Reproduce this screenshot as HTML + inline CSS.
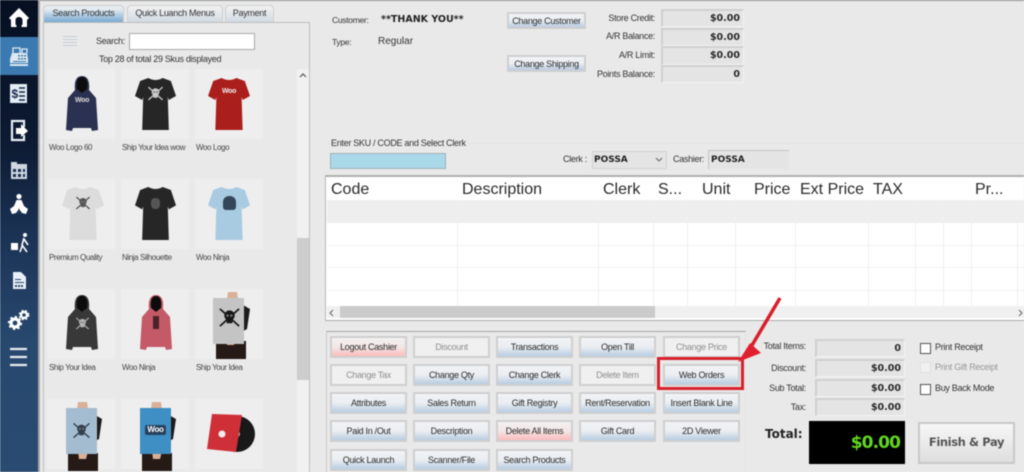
<!DOCTYPE html>
<html><head><meta charset="utf-8"><style>
html,body{margin:0;padding:0;width:1024px;height:472px;overflow:hidden;background:#e9e9e9}
body{font-family:"Liberation Sans",sans-serif;font-size:9px;color:#333;letter-spacing:-.3px}
#w{position:absolute;left:0;top:0;width:1024px;height:472px;overflow:hidden;background:#e9e9e9;filter:blur(.4px)}
.a,.t,.b,.v,.r{position:absolute}
.t{white-space:nowrap;line-height:12px}
.r{white-space:nowrap;line-height:12px;text-align:right}
.b{box-sizing:border-box;border:2px solid #cfcfcf;background:linear-gradient(#f1f3f6 0,#ebeef2 50%,#b9cde2 100%);text-align:center;color:#2a2a2a;white-space:nowrap;line-height:18px}
.b.p{background:linear-gradient(#f3f1f1 0,#f3e6e6 50%,#fbbcbc 100%)}
.b.d{background:#f0f0f0;color:#8e8e8e}
.v{box-sizing:border-box;background:#e4e4e4;border-top:2px solid #d0d0d0;border-left:2px solid #d0d0d0;border-right:1px solid #f2f2f2;border-bottom:1px solid #f2f2f2;text-align:right;font:bold 9.5px/15px "DejaVu Sans",sans-serif;letter-spacing:0;color:#2a2a2a;padding-right:3px}
.cb{position:absolute;width:9px;height:9px;border:1px solid #555;background:#fff}
.c{position:absolute;width:68px;height:70px;background:#eeeeee}
.l{font-size:8px;letter-spacing:-.4px;color:#444}
.tt{position:absolute;height:17px;border:1px solid #cfcfcf;border-bottom:0;box-sizing:border-box;border-radius:4px 4px 0 0;text-align:center;line-height:15px;background:linear-gradient(#f2f2f2,#d0dae3)}
.h{position:absolute;top:181px;font-size:16px;line-height:18px;color:#2a2a2a;white-space:nowrap;letter-spacing:0}
.vl{position:absolute;top:200px;height:106px;width:1px;background:#efefef}
.hl{position:absolute;left:327px;width:697px;height:1px;background:#f3f3f3}
.ic{position:absolute;left:0;width:38px;height:38px}
</style></head><body><div id="w">
<svg width="0" height="0" style="position:absolute"><defs>
<symbol id="tee" viewBox="0 0 40 52" preserveAspectRatio="none"><path fill="currentColor" d="M13 0Q20 4 27 0L35 3L40 18L33 22L32 19L33 52L7 52L8 19L7 22L0 18L5 3Z"/></symbol>
<symbol id="hood" viewBox="0 0 32 56" preserveAspectRatio="none"><path fill="currentColor" d="M16 0C22 0 24 6 23 14L30 22L32 54L26 55L25 52L7 52L6 55L0 54L2 22L9 14C8 6 10 0 16 0Z"/><path fill="#0c0c0c" d="M16 1C21 1 22 7 21 13L16 17L11 13C10 7 11 1 16 1Z"/></symbol>
<symbol id="skull" viewBox="0 0 24 24"><circle cx="12" cy="10" r="5.500" fill="currentColor"/><path fill="currentColor" d="M9 14H15V18H9Z"/><path stroke="currentColor" stroke-width="1.800" d="M2 3L22 21M22 3L2 21"/><circle cx="10" cy="10" r="1.300" fill="#777"/><circle cx="14" cy="10" r="1.300" fill="#777"/></symbol>
</defs></svg>

<!-- sidebar -->
<div class="a" style="left:0;top:0;width:38px;height:472px;background:linear-gradient(#071022 0,#0d1a32 30%,#1b3355 50%,#28486e 72%,#2a4b72 100%)"></div>
<div class="a" style="left:0;top:37px;width:38px;height:38px;background:#3a7ab0"></div>
<div class="a" style="left:38px;top:0;width:2px;height:472px;background:#a6a6a6"></div>
<div class="a" style="left:40px;top:0;width:984px;height:1px;background:#8c8c8c"></div>

<svg class="ic" style="top:0" viewBox="0 0 38 38"><path fill="#fff" d="M19 8L29 18L27 20V27H21.500V20.500C21.500 18 16.500 18 16.500 20.500V27H11V20L9 18Z"/><path fill="#0a1428" d="M15.500 25V20C15.500 16 22.500 16 22.500 20V25H21V20.500C21 18.500 17 18.500 17 20.500V25Z"/></svg>
<svg class="ic" style="top:37px" viewBox="0 0 38 38"><path fill="#dfe8f0" d="M10 26V22L12 16H27L28 22V26Z"/><path fill="#dfe8f0" d="M10 27H28V29H10Z"/><path fill="#3a7ab0" d="M18 18h2v1.500h-2zM21 18h2v1.500h-2zM24 18h2v1.500h-2zM18 21h2v1.500h-2zM21 21h2v1.500h-2zM24 21h2v1.500h-2zM13 24h13v1H13z"/><path fill="none" stroke="#dfe8f0" stroke-width="1.300" d="M13 16V11H20V16M22 16V12H27V16"/></svg>
<svg class="ic" style="top:75px" viewBox="0 0 38 38"><path fill="#e4edf4" d="M10 9H27V28H10Z"/><text x="11.500" y="23" font-family="Liberation Sans" font-weight="bold" font-size="12" fill="#14274a" letter-spacing="0">$</text><path stroke="#14274a" stroke-width="1.400" d="M19 13H25M19 17H25M19 21H25M19 25H25"/></svg>
<svg class="ic" style="top:112px" viewBox="0 0 38 38"><path fill="none" stroke="#e8eef4" stroke-width="2.200" d="M24 15V9H12V28H24V23"/><path fill="#fff" d="M16 16H21V12L28 19L21 25V22H16Z"/></svg>
<svg class="ic" style="top:150px" viewBox="0 0 38 38"><path fill="#cfd8e2" d="M11 12H17V14H27V29H11Z"/><path fill="#18304f" d="M13 19h3v3h-3zM18 19h3v3h-3zM23 19h2v3h-2zM13 24h3v3h-3zM18 24h3v3h-3zM23 24h2v3h-2z"/></svg>
<svg class="ic" style="top:187px" viewBox="0 0 38 38"><circle cx="19" cy="9.500" r="2.600" fill="#fff"/><path fill="#fff" d="M16.500 13H21.500L24 19L28 22L26 27L22 26L19 22L16 26L12 27L10 22L14 19Z"/><path fill="#1b3355" d="M19 21L17 27H21Z"/></svg>
<svg class="ic" style="top:225px" viewBox="0 0 38 38"><circle cx="25" cy="10" r="2" fill="#fff"/><path fill="none" stroke="#fff" stroke-width="1.600" d="M24 13L22 20L27 27M22.500 20L20 27M24 14L28 20"/><path fill="#fff" d="M11 18H18V25H11Z"/></svg>
<svg class="ic" style="top:263px" viewBox="0 0 38 38"><path fill="#e8f0f8" d="M13 9H21L26 14V26H13Z"/><path fill="#27466b" d="M15 16H21V17H15ZM15 19H24V20H15ZM15 22H17V24H15ZM18 22H20V24H18ZM21 22H23V24H21Z"/></svg>
<svg class="ic" style="top:301px" viewBox="0 0 38 38"><circle cx="15" cy="22" r="4" fill="none" stroke="#fff" stroke-width="3.200"/><circle cx="15" cy="22" r="6.200" fill="none" stroke="#fff" stroke-width="1.800" stroke-dasharray="2.200 2.600"/><circle cx="24" cy="14" r="3" fill="none" stroke="#fff" stroke-width="2.400"/><circle cx="24" cy="14" r="4.600" fill="none" stroke="#fff" stroke-width="1.500" stroke-dasharray="1.800 2"/></svg>
<svg class="ic" style="top:338px" viewBox="0 0 38 38"><path stroke="#e6ecf2" stroke-width="2.200" d="M10 11H27M10 19H27M10 27H27"/></svg>

<!-- left tabs and panel -->
<div class="tt" style="left:43px;top:5px;width:81px;background:linear-gradient(#e4ebf1 20%,#7aaad2)">Search Products</div>
<div class="tt" style="left:127px;top:5px;width:96px">Quick Luanch Menus</div>
<div class="tt" style="left:225px;top:5px;width:49px">Payment</div>
<div class="a" style="left:43px;top:22px;width:267px;height:450px;box-sizing:border-box;border:1px solid #bdbdbd;border-bottom:0"></div>
<svg class="a" style="left:63px;top:35px" width="14" height="13"><path stroke="#c5ced8" d="M0 1.500H14M0 4.500H14M0 7.500H14M0 10.500H14"/></svg>
<div class="t" style="left:96px;top:35px">Search:</div>
<div class="a" style="left:129px;top:33px;width:126px;height:17px;box-sizing:border-box;background:#fff;border:1px solid #a8a8a8"></div>
<div class="t" style="left:99px;top:53px">Top 28 of total 29 Skus displayed</div>

<div class="a" style="left:297px;top:69px;width:12px;height:403px;background:#f1f1f1"></div>
<div class="a" style="left:297px;top:238px;width:12px;height:142px;background:#cdcdcd"></div>
<svg class="a" style="left:299px;top:72px" width="8" height="6"><path fill="none" stroke="#555" stroke-width="1.200" d="M1 5L4 2L7 5"/></svg>

<!-- product cells -->
<div class="c" style="left:47px;top:69px"></div><div class="c" style="left:121px;top:69px"></div><div class="c" style="left:195px;top:69px"></div>
<div class="c" style="left:47px;top:179px"></div><div class="c" style="left:121px;top:179px"></div><div class="c" style="left:195px;top:179px"></div>
<div class="c" style="left:47px;top:289px"></div><div class="c" style="left:121px;top:289px"></div><div class="c" style="left:195px;top:289px"></div>
<div class="c" style="left:47px;top:399px"></div><div class="c" style="left:121px;top:399px"></div><div class="c" style="left:195px;top:399px"></div>

<svg class="a" style="left:66px;top:76px;color:#2b3150" width="32" height="56"><use href="#hood" width="32" height="56"/></svg>
<div class="t" style="left:75px;top:97px;color:#ddd;font:bold 7px/8px 'Liberation Sans',sans-serif">Woo</div>
<svg class="a" style="left:135px;top:78px;color:#262626" width="41" height="52"><use href="#tee" width="41" height="52"/></svg>
<svg class="a" style="left:147px;top:85px;color:#c9c9c9" width="17" height="17"><use href="#skull" width="17" height="17"/></svg>
<svg class="a" style="left:208px;top:78px;color:#aa1f1c" width="42" height="52"><use href="#tee" width="42" height="52"/></svg>
<div class="t" style="left:222px;top:88px;color:#eee;font:bold 7px/8px 'Liberation Sans',sans-serif">Woo</div>
<svg class="a" style="left:62px;top:187px;color:#dcdcdc" width="42" height="53"><use href="#tee" width="42" height="53"/></svg>
<svg class="a" style="left:75px;top:195px;color:#555" width="16" height="16"><use href="#skull" width="16" height="16"/></svg>
<svg class="a" style="left:135px;top:187px;color:#262626" width="41" height="53"><use href="#tee" width="41" height="53"/></svg>
<div class="a" style="left:151px;top:198px;width:9px;height:11px;border-radius:4px;background:#555"></div>
<svg class="a" style="left:208px;top:187px;color:#a8cbe2" width="42" height="53"><use href="#tee" width="42" height="53"/></svg>
<div class="a" style="left:223px;top:196px;width:13px;height:14px;border-radius:6px 6px 3px 3px;background:#33465a"></div>
<svg class="a" style="left:66px;top:295px;color:#383838" width="32" height="56"><use href="#hood" width="32" height="56"/></svg>
<svg class="a" style="left:75px;top:316px;color:#b5b5b5" width="15" height="15"><use href="#skull" width="15" height="15"/></svg>
<svg class="a" style="left:140px;top:295px;color:#c45a68" width="32" height="56"><use href="#hood" width="32" height="56"/></svg>
<div class="a" style="left:153px;top:316px;width:6px;height:13px;background:#4a2228"></div>

<!-- posters -->
<svg class="a" style="left:210px;top:291px" width="44" height="70"><path fill="#1c1c1c" d="M33 14L40 18L37 38L30 42Z"/><path fill="#251a15" d="M6 50H36V68H6Z"/><path fill="#d9b098" d="M18 1H27L28 8H17ZM16 46H26L24 54H17Z"/><path fill="#c4c4c4" d="M3 7H34V53H3Z"/></svg>
<svg class="a" style="left:218px;top:306px;color:#161616" width="23" height="23"><use href="#skull" width="23" height="23"/></svg>
<svg class="a" style="left:62px;top:401px" width="44" height="70"><path fill="#1c1c1c" d="M33 14L40 18L37 38L30 42Z"/><path fill="#251a15" d="M6 52H36V70H6Z"/><path fill="#d9b098" d="M16 1H25L26 8H15ZM16 50H26L24 58H17Z"/><path fill="#a3bcd0" d="M4 7H35V53H4Z"/></svg>
<svg class="a" style="left:72px;top:421px;color:#32404e" width="19" height="19"><use href="#skull" width="19" height="19"/></svg>
<svg class="a" style="left:136px;top:401px" width="44" height="70"><path fill="#1c1c1c" d="M33 14L40 18L37 38L30 42Z"/><path fill="#251a15" d="M6 52H36V70H6Z"/><path fill="#d9b098" d="M16 1H25L26 8H15ZM16 50H26L24 58H17Z"/><path fill="#3f8fc4" d="M4 7H35V53H4Z"/></svg>
<div class="t" style="left:145px;top:425px;width:21px;height:10px;background:#26405c;color:#fff;font:bold 8px/10px 'Liberation Sans',sans-serif;text-align:center;border-radius:2px">Woo</div>
<svg class="a" style="left:200px;top:408px" width="60" height="50"><circle cx="37" cy="26" r="18" fill="#191919"/><circle cx="37" cy="26" r="3" fill="#bbb"/><path fill="#cf3038" d="M12 6L42 7L36 44L7 41Z"/><circle cx="22" cy="26" r="3.500" fill="#eee"/></svg>

<div class="t l" style="left:49px;top:142px">Woo Logo 60</div>
<div class="t l" style="left:122px;top:142px">Ship Your Idea wow</div>
<div class="t l" style="left:196px;top:142px">Woo Logo</div>
<div class="t l" style="left:49px;top:252px">Premium Quality</div>
<div class="t l" style="left:122px;top:252px">Ninja Silhouette</div>
<div class="t l" style="left:196px;top:252px">Woo Ninja</div>
<div class="t l" style="left:49px;top:362px">Ship Your Idea</div>
<div class="t l" style="left:122px;top:362px">Woo Ninja</div>
<div class="t l" style="left:196px;top:362px">Ship Your Idea</div>

<!-- customer area -->
<div class="t" style="left:332px;top:14px;font-size:8.500px">Customer:</div>
<div class="t" style="left:381px;top:14px;font:bold 9.500px/12px 'DejaVu Sans',sans-serif;letter-spacing:0;color:#222">**THANK YOU**</div>
<div class="t" style="left:332px;top:36px;font-size:8.500px">Type:</div>
<div class="t" style="left:378px;top:36px;font-size:10px;letter-spacing:0">Regular</div>
<div class="b" style="left:507px;top:12px;width:79px;height:17px;line-height:14px">Change Customer</div>
<div class="b" style="left:507px;top:55px;width:79px;height:17px;line-height:14px">Change Shipping</div>
<div class="r" style="right:369px;top:12px">Store Credit:</div>
<div class="r" style="right:369px;top:30px">A/R Balance:</div>
<div class="r" style="right:369px;top:49px">A/R Limit:</div>
<div class="r" style="right:369px;top:68px">Points Balance:</div>
<div class="v" style="left:661px;top:9px;width:83px;height:18px">$0.00</div>
<div class="v" style="left:661px;top:28px;width:83px;height:18px">$0.00</div>
<div class="v" style="left:661px;top:46px;width:83px;height:19px">$0.00</div>
<div class="v" style="left:661px;top:65px;width:83px;height:18px">0</div>

<div class="a" style="left:326px;top:143px;width:698px;height:1px;background:#e2e2e2"></div>
<div class="t" style="left:331px;top:137px;background:#e9e9e9;padding-right:2px">Enter SKU / CODE and Select Clerk</div>
<div class="a" style="left:330px;top:153px;width:116px;height:16px;box-sizing:border-box;background:#a9d8e8;border:1px solid #a2b0b6"></div>
<div class="t" style="left:563px;top:153px">Clerk :</div>
<div class="a" style="left:592px;top:151px;width:75px;height:18px;box-sizing:border-box;background:#e4e4e4;border:1px solid #d2d2d2"></div>
<div class="t" style="left:594px;top:154px;font:bold 9px/12px 'DejaVu Sans',sans-serif;letter-spacing:0;color:#222">POSSA</div>
<svg class="a" style="left:655px;top:157px" width="8" height="6"><path fill="none" stroke="#666" d="M1 1L4 4L7 1"/></svg>
<div class="t" style="left:673px;top:153px">Cashier:</div>
<div class="a" style="left:708px;top:150px;width:81px;height:19px;box-sizing:border-box;background:#e4e4e4;border-top:1px solid #c4c4c4;border-left:1px solid #c4c4c4"></div>
<div class="t" style="left:711px;top:154px;font:bold 9px/12px 'DejaVu Sans',sans-serif;letter-spacing:0;color:#222">POSSA</div>

<!-- table -->
<div class="a" style="left:325px;top:175px;width:699px;height:146px;box-sizing:border-box;background:#fff;border-top:2px solid #b0b0b0;border-bottom:1px solid #a8a8a8;border-left:1px solid #b8b8b8"></div>
<div class="a" style="left:327px;top:200px;width:697px;height:23px;background:#eeeeee"></div>
<div class="hl" style="top:245px"></div><div class="hl" style="top:267px"></div><div class="hl" style="top:290px"></div>
<div class="vl" style="left:457px"></div><div class="vl" style="left:598px"></div><div class="vl" style="left:653px"></div><div class="vl" style="left:687px"></div><div class="vl" style="left:735px"></div><div class="vl" style="left:795px"></div><div class="vl" style="left:868px"></div><div class="vl" style="left:915px"></div><div class="vl" style="left:943px"></div><div class="vl" style="left:971px"></div><div class="vl" style="left:1017px"></div>
<div class="h" style="left:331px">Code</div>
<div class="h" style="left:462px">Description</div>
<div class="h" style="left:603px">Clerk</div>
<div class="h" style="left:658px">S...</div>
<div class="h" style="left:702px">Unit</div>
<div class="h" style="left:754px">Price</div>
<div class="h" style="left:800px">Ext Price</div>
<div class="h" style="left:873px">TAX</div>
<div class="h" style="left:975px">Pr...</div>
<div class="a" style="left:327px;top:306px;width:697px;height:12px;background:#f0f0f0"></div>
<div class="a" style="left:340px;top:306px;width:315px;height:12px;background:#cbcbcb"></div>
<svg class="a" style="left:329px;top:309px" width="6" height="8"><path fill="none" stroke="#666" d="M4 1L1 4L4 7"/></svg>
<svg class="a" style="left:1018px;top:309px" width="6" height="8"><path fill="none" stroke="#666" d="M1 1L4 4L1 7"/></svg>

<!-- button group -->
<div class="a" style="left:326px;top:331px;width:420px;height:141px;box-sizing:border-box;border-top:1px solid #a4a4a4;border-left:1px solid #c8c8c8;border-right:1px solid #e4e4e4"></div>
<div class="b p" style="left:330px;top:336px;width:77px;height:22px">Logout Cashier</div>
<div class="b d" style="left:413px;top:336px;width:77px;height:22px">Discount</div>
<div class="b" style="left:496px;top:336px;width:77px;height:22px">Transactions</div>
<div class="b" style="left:579px;top:336px;width:77px;height:22px">Open Till</div>
<div class="b d" style="left:663px;top:336px;width:77px;height:22px">Change Price</div>
<div class="b d" style="left:330px;top:364px;width:77px;height:22px">Change Tax</div>
<div class="b" style="left:413px;top:364px;width:77px;height:22px">Change Qty</div>
<div class="b" style="left:496px;top:364px;width:77px;height:22px">Change Clerk</div>
<div class="b d" style="left:579px;top:364px;width:77px;height:22px">Delete Item</div>
<div class="b" style="left:663px;top:364px;width:77px;height:22px">Web Orders</div>
<div class="b" style="left:330px;top:392px;width:77px;height:22px">Attributes</div>
<div class="b" style="left:413px;top:392px;width:77px;height:22px">Sales Return</div>
<div class="b" style="left:496px;top:392px;width:77px;height:22px">Gift Registry</div>
<div class="b" style="left:579px;top:392px;width:77px;height:22px">Rent/Reservation</div>
<div class="b" style="left:663px;top:392px;width:77px;height:22px">Insert Blank Line</div>
<div class="b" style="left:330px;top:420px;width:77px;height:22px">Paid In /Out</div>
<div class="b" style="left:413px;top:420px;width:77px;height:22px">Description</div>
<div class="b p" style="left:496px;top:420px;width:77px;height:22px">Delete All Items</div>
<div class="b" style="left:579px;top:420px;width:77px;height:22px">Gift Card</div>
<div class="b" style="left:663px;top:420px;width:77px;height:22px">2D Viewer</div>
<div class="b" style="left:330px;top:449px;width:77px;height:22px">Quick Launch</div>
<div class="b" style="left:413px;top:449px;width:77px;height:22px">Scanner/File</div>
<div class="b" style="left:496px;top:449px;width:77px;height:22px">Search Products</div>

<!-- annotation -->
<div class="a" style="left:657px;top:357px;width:87px;height:33px;box-sizing:border-box;border:3px solid #d8202c"></div>
<svg class="a" style="left:730px;top:292px" width="60" height="80"><path stroke="#d8202c" stroke-width="3.500" d="M50 6L18 60"/><path fill="#e02030" d="M8 70L20 51L31 61Z"/></svg>

<!-- totals -->
<div class="r" style="right:218px;top:340px">Total Items:</div>
<div class="r" style="right:218px;top:362px">Discount:</div>
<div class="r" style="right:218px;top:382px">Sub Total:</div>
<div class="r" style="right:218px;top:401px">Tax:</div>
<div class="v" style="left:815px;top:339px;width:90px;height:18px">0</div>
<div class="v" style="left:815px;top:359px;width:90px;height:18px">$0.00</div>
<div class="v" style="left:815px;top:379px;width:90px;height:18px">$0.00</div>
<div class="v" style="left:815px;top:398px;width:90px;height:18px">$0.00</div>
<div class="cb" style="left:920px;top:343px"></div>
<div class="t" style="left:935px;top:341px">Print Receipt</div>
<div class="cb" style="left:920px;top:362px;border-color:#e0e0e0;background:#f0f0f0"></div>
<div class="t" style="left:935px;top:361px;color:#999">Print Gift Receipt</div>
<div class="cb" style="left:920px;top:384px"></div>
<div class="t" style="left:935px;top:382px">Buy Back Mode</div>
<div class="t" style="left:765px;top:427px;font:bold 12px/14px 'DejaVu Sans',sans-serif;letter-spacing:0;color:#222">Total:</div>
<div class="a" style="left:809px;top:421px;width:96px;height:43px;background:#000"></div>
<div class="r" style="right:124px;top:433px;font:bold 17px/20px 'DejaVu Sans',sans-serif;letter-spacing:-.9px;color:#62d81e">$0.00</div>
<div class="a" style="left:918px;top:422px;width:97px;height:42px;box-sizing:border-box;border:2px solid #c8c8c8;background:linear-gradient(#f7f7f7,#dedede);text-align:center;font:bold 11.500px/36px 'DejaVu Sans',sans-serif;letter-spacing:-.4px;color:#555">Finish &amp; Pay</div>
</div></body></html>
